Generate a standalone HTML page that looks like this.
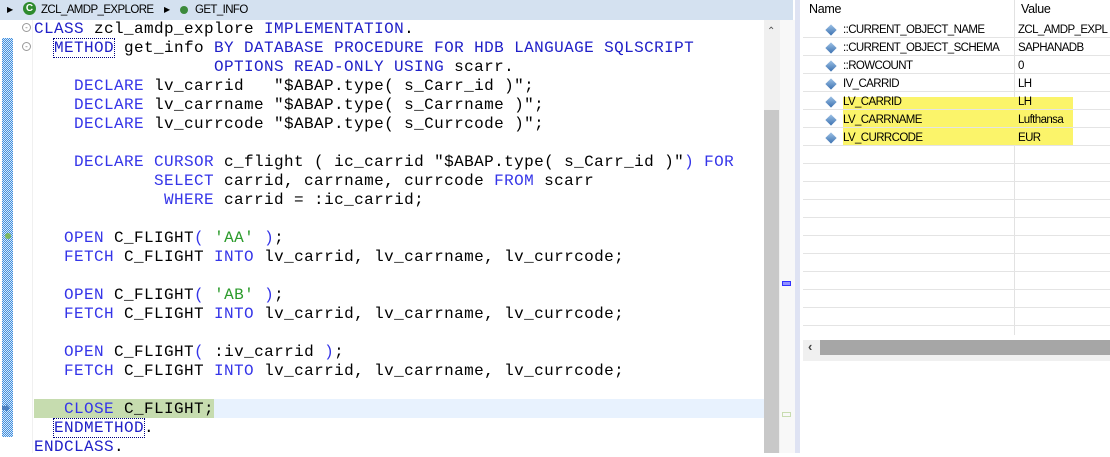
<!DOCTYPE html>
<html><head><style>
*{margin:0;padding:0;box-sizing:border-box}
body{width:1110px;height:453px;overflow:hidden;background:#fff;position:relative;font-family:"Liberation Sans",sans-serif}
.bc{position:absolute;left:0;top:0;width:793px;height:20px;background:#d4e1f0;font-size:11.5px;letter-spacing:-0.6px;color:#000}
.bc span{position:absolute;top:4px}
.stripe{position:absolute;left:2px;top:38px;width:11px;height:399px;background-color:#4a96e0;background-image:repeating-conic-gradient(#3f8fe0 0 25%,#d8e8f8 0 50%);background-size:2px 2px}
.gl{position:absolute;left:32px;top:20px;width:1px;height:433px;background:#f0f0f0}
.code{position:absolute;left:34px;top:20px;font-family:"Liberation Mono",monospace;font-size:16px;letter-spacing:0.4px;line-height:19px;white-space:pre;color:#000}
.k{color:#3535e8}.s{color:#2a9a2a}.kk{color:#2020c8}
.cur{position:absolute;left:34px;top:399px;width:730px;height:19px;background:#e8f2fe}
.cur2{position:absolute;left:34px;top:399px;width:180px;height:19px;background:#c6dcaf}
.box{outline:1px dotted #000080;outline-offset:0}
.sb{position:absolute;left:764px;top:20px;width:16px;height:433px;background:#f0f0f0}
.thumb{position:absolute;left:764px;top:110px;width:15px;height:343px;background:#c8c8c8}
.ov{position:absolute;left:780px;top:20px;width:15px;height:433px;background:#f8f8f8}
.div{position:absolute;left:795px;top:0;width:5px;height:453px;background:#dfe3f3}
.rp{position:absolute;left:800px;top:0;width:310px;height:453px;background:#fff;font-size:11.5px;letter-spacing:-0.6px}
.hdr{position:absolute;top:2px;font-size:12.5px;letter-spacing:-0.3px}
.row{position:absolute;left:3px;width:307px;height:18px;border-bottom:1px solid #e4e4e4}
.row .n{position:absolute;left:40px;top:4px;white-space:nowrap}
.row .v{position:absolute;left:215px;top:4px;white-space:nowrap}
.dm{position:absolute;left:24px;top:6px;width:8px;height:8px;background:linear-gradient(135deg,#9ec2e6,#3a70b0);transform:rotate(45deg)}
.vl{position:absolute;left:214px;top:0;width:1px;height:335px;background:#e2e2e2}
.hl{position:absolute;left:43px;top:97px;width:230px;height:49px;background:#fbf46a}
</style></head><body>
<div class="bc">
<span style="left:7px;top:5px;font-size:8px">&#9654;</span>
<span style="left:23px;top:2px;width:13px;height:13px;border-radius:50%;background:#2e8b2e;color:#fff;font-size:10px;font-weight:bold;text-align:center;line-height:13px;letter-spacing:0">C</span>
<span style="left:41px">ZCL_AMDP_EXPLORE</span>
<span style="left:164px;top:5px;font-size:8px">&#9654;</span>
<span style="left:180px;top:6px;width:8px;height:8px;border-radius:50%;background:#3c8a3c"></span>
<span style="left:195px">GET_INFO</span>
</div>
<div class="stripe"></div>
<div class="gl"></div>
<div style="position:absolute;left:22px;top:23px;width:9px;height:9px;border:1px solid #999;border-radius:50%;font-size:8px;line-height:7px;text-align:center;color:#777">-</div>
<div style="position:absolute;left:22px;top:42px;width:9px;height:9px;border:1px solid #999;border-radius:50%;font-size:8px;line-height:7px;text-align:center;color:#777">-</div>
<div style="position:absolute;left:5px;top:233px;width:6px;height:6px;border-radius:50%;background:#7cb860"></div>
<div style="position:absolute;left:2px;top:404px;width:8px;height:8px;background:#4a80c0;clip-path:polygon(0 25%,50% 25%,50% 0,100% 50%,50% 100%,50% 75%,0 75%)"></div>
<div class="cur"></div><div class="cur2"></div>
<div class="code"><span class="kk">CLASS</span> zcl_amdp_explore <span class="kk">IMPLEMENTATION</span>.
  <span class="kk box">METHOD</span> get_info <span class="kk">BY DATABASE PROCEDURE FOR HDB LANGUAGE SQLSCRIPT</span>
                  <span class="kk">OPTIONS READ-ONLY USING</span> scarr.
    <span class="k">DECLARE</span> lv_carrid   "$ABAP.type( s_Carr_id )";
    <span class="k">DECLARE</span> lv_carrname "$ABAP.type( s_Carrname )";
    <span class="k">DECLARE</span> lv_currcode "$ABAP.type( s_Currcode )";

    <span class="k">DECLARE CURSOR</span> c_flight ( ic_carrid "$ABAP.type( s_Carr_id )"<span class="k">) FOR</span>
            <span class="k">SELECT</span> carrid, carrname, currcode <span class="k">FROM</span> scarr
             <span class="k">WHERE</span> carrid = :ic_carrid;

   <span class="k">OPEN</span> C_FLIGHT<span class="k">(</span> <span class="s">'AA'</span> <span class="k">)</span>;
   <span class="k">FETCH</span> C_FLIGHT <span class="k">INTO</span> lv_carrid, lv_carrname, lv_currcode;

   <span class="k">OPEN</span> C_FLIGHT<span class="k">(</span> <span class="s">'AB'</span> <span class="k">)</span>;
   <span class="k">FETCH</span> C_FLIGHT <span class="k">INTO</span> lv_carrid, lv_carrname, lv_currcode;

   <span class="k">OPEN</span> C_FLIGHT<span class="k">(</span> :iv_carrid <span class="k">)</span>;
   <span class="k">FETCH</span> C_FLIGHT <span class="k">INTO</span> lv_carrid, lv_carrname, lv_currcode;

   <span class="k">CLOSE</span> C_FLIGHT;
  <span class="kk box">ENDMETHOD</span>.
<span class="kk">ENDCLASS</span>.</div>
<div class="sb"></div><div class="thumb"></div>
<div style="position:absolute;left:767px;top:26px;font-size:10px;color:#555">&#8963;</div>
<div class="ov"></div>
<div style="position:absolute;left:782px;top:281px;width:9px;height:5px;border:1px solid #3030ff;background:#9090ff"></div>
<div style="position:absolute;left:782px;top:412px;width:9px;height:5px;border:1px solid #c8dcb0"></div>
<div class="div"></div>
<div class="rp">
<div class="vl"></div>
<div class="hdr" style="left:9px">Name</div>
<div class="hdr" style="left:221px">Value</div>
<div class="hl"></div>
<div class="row" style="top:20px"><i class="dm"></i><span class="n">::CURRENT_OBJECT_NAME</span><span class="v">ZCL_AMDP_EXPL</span></div>
<div class="row" style="top:38px"><i class="dm"></i><span class="n">::CURRENT_OBJECT_SCHEMA</span><span class="v">SAPHANADB</span></div>
<div class="row" style="top:56px"><i class="dm"></i><span class="n">::ROWCOUNT</span><span class="v">0</span></div>
<div class="row" style="top:74px"><i class="dm"></i><span class="n">IV_CARRID</span><span class="v">LH</span></div>
<div class="row" style="top:92px"><i class="dm"></i><span class="n">LV_CARRID</span><span class="v">LH</span></div>
<div class="row" style="top:110px"><i class="dm"></i><span class="n">LV_CARRNAME</span><span class="v">Lufthansa</span></div>
<div class="row" style="top:128px"><i class="dm"></i><span class="n">LV_CURRCODE</span><span class="v">EUR</span></div>
<div class="row" style="top:146px"></div>
<div class="row" style="top:164px"></div>
<div class="row" style="top:182px"></div>
<div class="row" style="top:200px"></div>
<div class="row" style="top:218px"></div>
<div class="row" style="top:236px"></div>
<div class="row" style="top:254px"></div>
<div class="row" style="top:272px"></div>
<div class="row" style="top:290px"></div>
<div class="row" style="top:308px"></div>
<div style="position:absolute;left:3px;top:340px;width:307px;height:21px;background:#f0f0f0"></div>
<div style="position:absolute;left:20px;top:340px;width:290px;height:15px;background:#a6a6a6"></div>
<div style="position:absolute;left:8px;top:339px;font-size:13px;font-weight:bold;color:#444">&#8249;</div>
</div>
</body></html>
